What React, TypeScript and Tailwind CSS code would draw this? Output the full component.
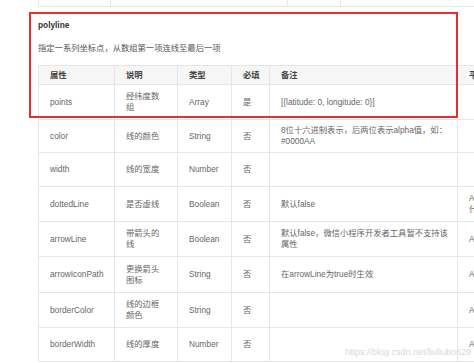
const font = "font-['Liberation_Sans','Noto_Sans_CJK_SC',sans-serif]";

const rows = [
  { name: "points", desc: "经纬度数组", type: "Array", req: "是", note: "[{latitude: 0, longitude: 0}]", plat: "", h: "h-[35px]" },
  { name: "color", desc: "线的颜色", type: "String", req: "否", note: "8位十六进制表示，后两位表示alpha值，如：#0000AA", plat: "", h: "h-[33px]" },
  { name: "width", desc: "线的宽度", type: "Number", req: "否", note: "", plat: "", h: "h-[34px]" },
  { name: "dottedLine", desc: "是否虚线", type: "Boolean", req: "否", note: "默认false", plat: "Ap\n什", h: "h-[35px]" },
  { name: "arrowLine", desc: "带箭头的线", type: "Boolean", req: "否", note: "默认false，微信小程序开发者工具暂不支持该属性", plat: "Ap", h: "h-[35px]" },
  { name: "arrowIconPath", desc: "更换箭头图标", type: "String", req: "否", note: "在arrowLine为true时生效", plat: "Ap", h: "h-[36px]" },
  { name: "borderColor", desc: "线的边框颜色", type: "String", req: "否", note: "", plat: "Ap", h: "h-[35px]" },
  { name: "borderWidth", desc: "线的厚度", type: "Number", req: "否", note: "", plat: "Ap", h: "h-[34px]" },
];

const cols = "grid grid-cols-[76px_63px_54px_38px_188px_120px]";
const cell = "border-r border-[#e6e6e6] pl-[11px] pr-[8px] flex items-center overflow-hidden";
const descCell = "border-r border-[#e6e6e6] pl-[11px] pr-[13px] flex items-center overflow-hidden";

export default function App() {
  return (
    <div className={`relative w-[474px] h-[363px] overflow-hidden bg-white ${font} text-[8.3px] leading-[11px] text-[#666]`}>
      {/* previous table tail */}
      <div className="ml-[38px] h-[7px] flex border-b border-l border-[#e6e6e6]">
        <div className="w-[72px] border-r border-[#e6e6e6]" />
        <div className="w-[177px] border-r border-[#e6e6e6]" />
        <div className="w-[53px] border-r border-[#e6e6e6]" />
        <div className="flex-1" />
      </div>

      <div className="pl-[38px]">
        <h3 className="mt-[13px] font-bold text-[#333]">polyline</h3>
        <p className="mt-[12px] text-[#555]">指定一系列坐标点，从数组第一项连线至最后一项</p>

        {/* table */}
        <div className="mt-[11px] border-l border-t border-[#e6e6e6] w-[600px]">
          <div className={`${cols} h-[19px] bg-[#f6f6f6] border-b border-[#e6e6e6] font-bold text-[#444]`}>
            <div className={cell}>属性</div>
            <div className={descCell}>说明</div>
            <div className={cell}>类型</div>
            <div className={cell}>必填</div>
            <div className={cell}>备注</div>
            <div className={cell}>平台差异说明</div>
          </div>
          {rows.map((r) => (
            <div key={r.name} className={`${cols} ${r.h} border-b border-[#e6e6e6]`}>
              <div className={cell}>{r.name}</div>
              <div className={descCell}>{r.desc}</div>
              <div className={cell}>{r.type}</div>
              <div className={cell}>{r.req}</div>
              <div className={cell}>{r.note}</div>
              <div className={`${cell} whitespace-pre-line`}>{r.plat}</div>
            </div>
          ))}
        </div>
      </div>

      {/* red annotation box */}
      <div className="absolute left-[29px] top-[12px] w-[429px] h-[106px] border-2 border-[#e3302f]" />

      {/* watermark */}
      <div className="absolute left-[345px] top-[347px] text-[9px] text-[#d8d8d8] font-['Liberation_Sans',sans-serif]">
        https://blog.csdn.net/liuliubo629
      </div>
    </div>
  );
}
